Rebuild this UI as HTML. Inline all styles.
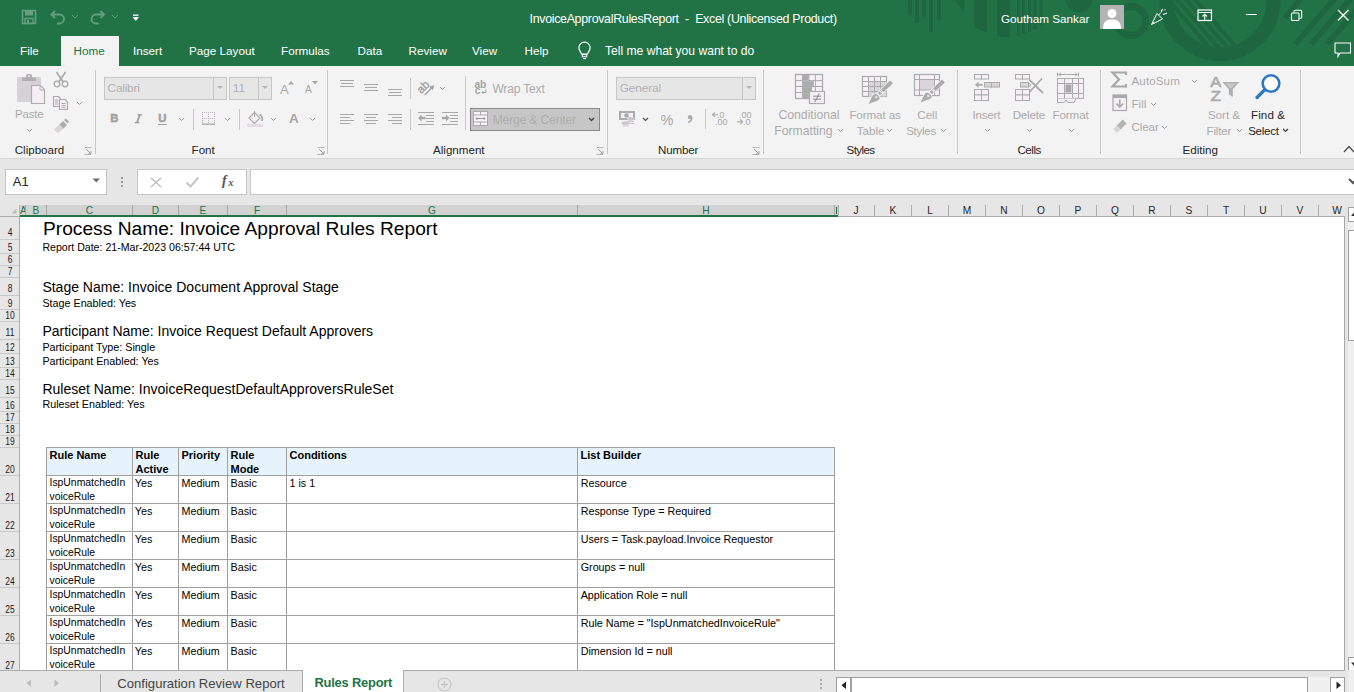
<!DOCTYPE html>
<html><head><meta charset="utf-8"><style>
html,body{margin:0;padding:0;}
body{width:1354px;height:692px;overflow:hidden;position:relative;background:#fff;font-family:"Liberation Sans", sans-serif;}
.t{position:absolute;white-space:pre;}
.b{position:absolute;}
.s{position:absolute;overflow:visible;}
</style></head><body>
<div class="b" style="left:0px;top:0px;width:1354px;height:66px;background:#217346;"></div>
<svg class="s" style="left:0px;top:0px;overflow:hidden;" width="1354" height="66" viewBox="0 0 1354 66"><rect x="908" y="0" width="4" height="15.5" fill="#1E6640"/><rect x="915" y="0" width="4" height="23" fill="#1E6640"/><rect x="922" y="0" width="4" height="16.5" fill="#1E6640"/><rect x="929" y="0" width="4" height="32" fill="#1E6640"/><rect x="937" y="0" width="4" height="20" fill="#1E6640"/><polygon points="955,0 965,0 964,13" fill="#1E6640"/><path d="M974 0 H987 V32.5 Q980 31 974 27 Z" fill="#1E6640"/><path d="M997 0 H1010 V37 Q1003 37 997 36 Z" fill="#1E6640"/><rect x="1017" y="0" width="3" height="35.5" fill="#1E6640"/><rect x="1022" y="0" width="3" height="34" fill="#1E6640"/><rect x="1028" y="0" width="3" height="32" fill="#1E6640"/><rect x="1033.5" y="0" width="3" height="29" fill="#1E6640"/><rect x="1039.5" y="0" width="3" height="25" fill="#1E6640"/><circle cx="1079" cy="-2" r="14" fill="#1E6640"/><circle cx="1131" cy="21" r="14.5" fill="none" stroke="#1E6640" stroke-width="7"/><circle cx="1220" cy="0.5" r="53.5" fill="none" stroke="#1E6640" stroke-width="14"/><clipPath id="cr"><circle cx="1220" cy="0.5" r="47"/></clipPath><g clip-path="url(#cr)" stroke="#1E6640" stroke-width="4"><line x1="1160" y1="-10" x2="1220" y2="60"/><line x1="1169" y1="-10" x2="1229" y2="60"/><line x1="1178" y1="-10" x2="1238" y2="60"/><line x1="1187" y1="-10" x2="1247" y2="60"/></g><g stroke="#1E6640" stroke-width="5.5"><line x1="1360" y1="-30" x2="1295" y2="44"/><line x1="1376" y1="-30" x2="1311" y2="44"/><line x1="1392" y1="-30" x2="1327" y2="44"/><line x1="1300" y1="0" x2="1285" y2="18"/></g></svg>
<div class="t" style="left:529.5px;top:12.50px;font-size:12.4px;line-height:12.4px;color:#fff;letter-spacing:-0.3px;">InvoiceApprovalRulesReport  -  Excel (Unlicensed Product)</div>
<div class="t" style="left:1001px;top:12.60px;font-size:11.7px;line-height:11.7px;color:#fff;">Goutham Sankar</div>
<div class="b" style="left:1100px;top:5px;width:24px;height:24px;background:#B3B3B3;"></div>
<svg class="s" style="left:1100px;top:5px;" width="24" height="24" viewBox="0 0 24 24"><circle cx="12" cy="8.5" r="4.5" fill="#fff"/><path d="M3 24 C3 16 7 14.5 12 14.5 C17 14.5 21 16 21 24Z" fill="#fff"/></svg>
<svg class="s" style="left:21px;top:9px;" width="16" height="16" viewBox="0 0 16 16"><path d="M1.5 1.5 H14.5 V14.5 H1.5 Z" fill="none" stroke="#62A07E" stroke-width="1.6"/><rect x="4" y="1.5" width="8" height="5" fill="#62A07E"/><rect x="4" y="9.5" width="8" height="5" fill="none" stroke="#62A07E" stroke-width="1.4"/><rect x="6" y="11" width="2" height="3.5" fill="#62A07E"/></svg>
<svg class="s" style="left:50px;top:9px;" width="17" height="15" viewBox="0 0 17 15"><path d="M5 2 L1.5 5.5 L5 9" fill="none" stroke="#62A07E" stroke-width="1.8"/><path d="M2 5.5 H9.5 A4.5 4.5 0 0 1 9.5 14.5 H7" fill="none" stroke="#62A07E" stroke-width="1.8"/></svg>
<svg class="s" style="left:71px;top:14px;" width="8" height="5" viewBox="0 0 8 5"><polyline points="1,1 4,4 7,1" fill="none" stroke="#62A07E" stroke-width="1"/></svg>
<svg class="s" style="left:89px;top:9px;" width="17" height="15" viewBox="0 0 17 15"><path d="M11.5 2 L15 5.5 L11.5 9" fill="none" stroke="#62A07E" stroke-width="1.8"/><path d="M14.5 5.5 H7 A4.5 4.5 0 0 0 7 14.5 H9.5" fill="none" stroke="#62A07E" stroke-width="1.8"/></svg>
<svg class="s" style="left:110.5px;top:14px;" width="8" height="5" viewBox="0 0 8 5"><polyline points="1,1 4,4 7,1" fill="none" stroke="#62A07E" stroke-width="1"/></svg>
<svg class="s" style="left:132px;top:14px;" width="8" height="8" viewBox="0 0 8 8"><rect x="1" y="0.5" width="5.5" height="1.3" fill="#fff"/><polygon points="0.5,3 7,3 3.75,7" fill="#fff"/></svg>
<svg class="s" style="left:577px;top:41px;" width="15" height="19" viewBox="0 0 15 19"><path d="M4.5 13 L3.2 10.3 A5.6 5.6 0 1 1 11.8 10.3 L10.5 13 Z" fill="none" stroke="#fff" stroke-width="1.2"/><rect x="5.3" y="13.5" width="4.4" height="2.3" fill="none" stroke="#fff" stroke-width="1.1"/><line x1="6" y1="17.6" x2="9" y2="17.6" stroke="#fff" stroke-width="1.1"/></svg>
<svg class="s" style="left:1150px;top:8px;" width="19" height="18" viewBox="0 0 19 18"><path d="M1.5 16.5 L7 5.5 L12.5 11 Z" fill="none" stroke="#fff" stroke-width="1"/><line x1="4" y1="16" x2="3" y2="14" stroke="#fff"/><line x1="11" y1="4" x2="12.5" y2="1" stroke="#fff" stroke-width="1.1"/><line x1="13" y1="6.5" x2="17" y2="5" stroke="#fff" stroke-width="1.1"/><line x1="14" y1="2.5" x2="15.5" y2="1" stroke="#fff"/><line x1="8.5" y1="7" x2="11" y2="4.5" stroke="#fff"/></svg>
<svg class="s" style="left:1197px;top:9px;" width="16" height="13" viewBox="0 0 16 13"><rect x="1" y="1" width="13.5" height="10.5" fill="none" stroke="#fff" stroke-width="1.2"/><line x1="1" y1="3.5" x2="14.5" y2="3.5" stroke="#fff" stroke-width="1"/><line x1="7.75" y1="5.5" x2="7.75" y2="11" stroke="#fff" stroke-width="1.1"/><polyline points="5.5,7.5 7.75,5.2 10,7.5" fill="none" stroke="#fff" stroke-width="1.1"/></svg>
<div class="b" style="left:1246px;top:14px;width:10.5px;height:1.1px;background:#fff;"></div>
<svg class="s" style="left:1290px;top:9px;" width="14" height="13" viewBox="0 0 14 13"><rect x="1.5" y="4" width="7.5" height="7.5" rx="1" fill="none" stroke="#fff" stroke-width="1.1"/><path d="M4 3.5 V2.5 A1.2 1.2 0 0 1 5.2 1.3 H10.5 A1.2 1.2 0 0 1 11.7 2.5 V8 A1.2 1.2 0 0 1 10.5 9.2 H9.5" fill="none" stroke="#fff" stroke-width="1.1"/></svg>
<svg class="s" style="left:1337px;top:9px;" width="13" height="13" viewBox="0 0 13 13"><line x1="1" y1="1" x2="11.5" y2="11.5" stroke="#fff" stroke-width="1.2"/><line x1="11.5" y1="1" x2="1" y2="11.5" stroke="#fff" stroke-width="1.2"/></svg>
<svg class="s" style="left:1334px;top:42px;" width="18" height="17" viewBox="0 0 18 17"><path d="M1 1 H16.5 V11 H6 L4 14.5 V11 H1 Z" fill="none" stroke="#fff" stroke-width="1.1" stroke-linejoin="miter"/></svg>
<div class="b" style="left:61px;top:36px;width:58px;height:30px;background:#F3F3F3;"></div>
<div class="t" style="left:20px;top:45.30px;font-size:11.7px;line-height:11.7px;color:#fff;">File</div>
<div class="t" style="left:73.5px;top:45.30px;font-size:11.7px;line-height:11.7px;color:#217346;">Home</div>
<div class="t" style="left:133px;top:45.30px;font-size:11.7px;line-height:11.7px;color:#fff;">Insert</div>
<div class="t" style="left:189px;top:45.30px;font-size:11.7px;line-height:11.7px;color:#fff;">Page Layout</div>
<div class="t" style="left:281px;top:45.30px;font-size:11.7px;line-height:11.7px;color:#fff;">Formulas</div>
<div class="t" style="left:357.5px;top:45.30px;font-size:11.7px;line-height:11.7px;color:#fff;">Data</div>
<div class="t" style="left:408.5px;top:45.30px;font-size:11.7px;line-height:11.7px;color:#fff;">Review</div>
<div class="t" style="left:472px;top:45.30px;font-size:11.7px;line-height:11.7px;color:#fff;">View</div>
<div class="t" style="left:524.5px;top:45.30px;font-size:11.7px;line-height:11.7px;color:#fff;">Help</div>
<div class="t" style="left:605px;top:44.96px;font-size:12.1px;line-height:12.1px;color:#fff;">Tell me what you want to do</div>
<div class="b" style="left:0px;top:66px;width:1354px;height:92px;background:#F3F3F3;"></div>
<div class="b" style="left:0px;top:158px;width:1354px;height:1px;background:#D6D6D6;"></div>
<div class="b" style="left:95px;top:70px;width:1px;height:84px;background:#C8C8C8;"></div>
<div class="b" style="left:327px;top:70px;width:1px;height:84px;background:#C8C8C8;"></div>
<div class="b" style="left:607px;top:70px;width:1px;height:84px;background:#C8C8C8;"></div>
<div class="b" style="left:763px;top:70px;width:1px;height:84px;background:#C8C8C8;"></div>
<div class="b" style="left:957px;top:70px;width:1px;height:84px;background:#C8C8C8;"></div>
<div class="b" style="left:1100px;top:70px;width:1px;height:84px;background:#C8C8C8;"></div>
<div class="b" style="left:1300px;top:70px;width:1px;height:84px;background:#C8C8C8;"></div>
<div class="t" style="left:14.7px;top:144.18px;font-size:11.6px;line-height:11.6px;color:#262626;letter-spacing:0px;">Clipboard</div>
<div class="t" style="left:191.6px;top:144.18px;font-size:11.6px;line-height:11.6px;color:#262626;letter-spacing:0px;">Font</div>
<div class="t" style="left:433px;top:144.18px;font-size:11.6px;line-height:11.6px;color:#262626;letter-spacing:0px;">Alignment</div>
<div class="t" style="left:658px;top:144.18px;font-size:11.6px;line-height:11.6px;color:#262626;letter-spacing:-0.15px;">Number</div>
<div class="t" style="left:846.6px;top:144.18px;font-size:11.6px;line-height:11.6px;color:#262626;letter-spacing:-0.6px;">Styles</div>
<div class="t" style="left:1017.5px;top:144.18px;font-size:11.6px;line-height:11.6px;color:#262626;letter-spacing:-0.5px;">Cells</div>
<div class="t" style="left:1182.5px;top:144.18px;font-size:11.6px;line-height:11.6px;color:#262626;letter-spacing:0px;">Editing</div>
<svg class="s" style="left:16px;top:73px;" width="30" height="32" viewBox="0 0 30 32">
<rect x="1" y="4" width="24" height="25" rx="1.5" fill="#D5D1D5"/>
<rect x="6" y="4.5" width="14" height="3.5" fill="#AFADAF"/>
<rect x="10" y="1" width="6" height="4" rx="1.5" fill="#AFADAF"/>
<rect x="12" y="2.2" width="2" height="1.6" fill="#EEE"/>
<path d="M15.5 12.5 H24.5 L28.5 16.5 V30.5 H15.5 Z" fill="#F6F0F6" stroke="#AEAEAE" stroke-width="1.2"/>
<path d="M24 12.5 V17 H28.5" fill="none" stroke="#AEAEAE" stroke-width="1"/>
</svg>
<div class="t" style="left:15px;top:109.07px;font-size:11.5px;line-height:11.5px;color:#ABABAB;letter-spacing:-0.2px;">Paste</div>
<svg class="s" style="left:25.5px;top:127.94999999999999px;" width="7" height="4.5" viewBox="0 0 7 4.5"><polyline points="1,1 3.5,3.5 6,1" fill="none" stroke="#A0A0A0" stroke-width="1"/></svg>
<svg class="s" style="left:53px;top:71px;" width="17" height="17" viewBox="0 0 17 17">
<line x1="3.5" y1="1" x2="10.5" y2="11.5" stroke="#A9A9A9" stroke-width="1.6"/>
<line x1="12.5" y1="1" x2="5.5" y2="11.5" stroke="#A9A9A9" stroke-width="1.6"/>
<circle cx="4" cy="13" r="2.8" fill="none" stroke="#A9A9A9" stroke-width="1.3"/>
<circle cx="12" cy="13" r="2.8" fill="none" stroke="#A9A9A9" stroke-width="1.3"/>
</svg>
<svg class="s" style="left:52px;top:95px;" width="18" height="16" viewBox="0 0 18 16">
<path d="M1.5 1.5 H6.5 L8.5 3.5 V11.5 H1.5 Z" fill="#F6F0F6" stroke="#A9A9A9" stroke-width="1.1"/>
<line x1="3" y1="5" x2="6.5" y2="5" stroke="#A9A9A9"/><line x1="3" y1="7" x2="6.5" y2="7" stroke="#A9A9A9"/><line x1="3" y1="9" x2="6.5" y2="9" stroke="#A9A9A9"/>
<path d="M7.5 4.5 H13 L15.5 7 V14.5 H7.5 Z" fill="#F6F0F6" stroke="#A9A9A9" stroke-width="1.1"/>
<line x1="9.5" y1="8.5" x2="13.5" y2="8.5" stroke="#A9A9A9"/><line x1="9.5" y1="10.5" x2="13.5" y2="10.5" stroke="#A9A9A9"/><line x1="9.5" y1="12.5" x2="13.5" y2="12.5" stroke="#A9A9A9"/>
</svg>
<svg class="s" style="left:75.5px;top:101.25px;" width="7" height="4.5" viewBox="0 0 7 4.5"><polyline points="1,1 3.5,3.5 6,1" fill="none" stroke="#A0A0A0" stroke-width="1"/></svg>
<svg class="s" style="left:53px;top:118px;" width="17" height="16" viewBox="0 0 17 16">
<path d="M1 12 L6.5 6.5 L10.5 10.5 L5 15 Z" fill="#D8D4D8"/>
<path d="M6.5 6.5 L10 3 L14 7 L10.5 10.5 Z" fill="#ABABAB"/>
<path d="M11 2 L13 0.5 L16 3.5 L14.5 5.5 Z" fill="#ABABAB"/>
</svg>
<div class="b" style="left:104px;top:77px;width:123px;height:23px;background:#E6E6E6;border:1px solid #C6C6C6;box-sizing:border-box;"></div>
<div class="b" style="left:213px;top:78px;width:1px;height:21px;background:#C6C6C6;"></div>
<div class="t" style="left:107.6px;top:82.81px;font-size:11.8px;line-height:11.8px;color:#B1AFB1;letter-spacing:-0.2px;">Calibri</div>
<svg class="s" style="left:217px;top:86px;" width="6" height="4" viewBox="0 0 6 4"><polygon points="0,0 6,0 3,3" fill="#B4B4B4"/></svg>
<div class="b" style="left:229px;top:77px;width:43px;height:23px;background:#E6E6E6;border:1px solid #C6C6C6;box-sizing:border-box;"></div>
<div class="b" style="left:258px;top:78px;width:1px;height:21px;background:#C6C6C6;"></div>
<div class="t" style="left:232.8px;top:82.81px;font-size:11.8px;line-height:11.8px;color:#B1AFB1;">11</div>
<svg class="s" style="left:261.5px;top:86px;" width="6" height="4" viewBox="0 0 6 4"><polygon points="0,0 6,0 3,3" fill="#B4B4B4"/></svg>
<div class="t" style="left:280px;top:82.80px;font-size:13px;line-height:13px;color:#A6A6A6;">A</div>
<svg class="s" style="left:288px;top:80.5px;" width="6" height="4" viewBox="0 0 6 4"><polygon points="0,3.5 3,0 6,3.5" fill="#A6A6A6"/></svg>
<div class="t" style="left:305px;top:85.33px;font-size:10px;line-height:10px;color:#A6A6A6;">A</div>
<svg class="s" style="left:311.5px;top:81px;" width="6" height="4" viewBox="0 0 6 4"><polygon points="0,0 6,0 3,3.5" fill="#A6A6A6"/></svg>
<div class="t" style="left:110.3px;top:113.23px;font-size:11.3px;line-height:11.3px;color:#A0A0A0;font-weight:bold;-webkit-text-stroke:0.5px #A0A0A0;">B</div>
<svg class="s" style="left:134px;top:114px;" width="9" height="10" viewBox="0 0 9 10"><line x1="3.5" y1="0.8" x2="8" y2="0.8" stroke="#A0A0A0" stroke-width="1.4"/><line x1="0.8" y1="8.6" x2="5.3" y2="8.6" stroke="#A0A0A0" stroke-width="1.4"/><line x1="5.9" y1="0.8" x2="3" y2="8.6" stroke="#A0A0A0" stroke-width="1.8"/></svg>
<div class="t" style="left:158.2px;top:113.23px;font-size:11.3px;line-height:11.3px;color:#A0A0A0;font-weight:bold;-webkit-text-stroke:0.5px #A0A0A0;">U</div>
<div class="b" style="left:158px;top:123.8px;width:9px;height:1.2px;background:#A0A0A0;"></div>
<svg class="s" style="left:177.5px;top:116.75px;" width="7" height="4.5" viewBox="0 0 7 4.5"><polyline points="1,1 3.5,3.5 6,1" fill="none" stroke="#A0A0A0" stroke-width="1"/></svg>
<div class="b" style="left:193px;top:109px;width:1px;height:21px;background:#C8C8C8;"></div>
<svg class="s" style="left:201px;top:111px;" width="16" height="15" viewBox="0 0 16 15"><rect x="1" y="1" width="1" height="1" fill="#B8B0B8"/><rect x="1" y="3" width="1" height="1" fill="#B8B0B8"/><rect x="1" y="5" width="1" height="1" fill="#B8B0B8"/><rect x="1" y="7" width="1" height="1" fill="#B8B0B8"/><rect x="1" y="9" width="1" height="1" fill="#B8B0B8"/><rect x="1" y="11" width="1" height="1" fill="#B8B0B8"/><rect x="3" y="1" width="1" height="1" fill="#B8B0B8"/><rect x="3" y="7" width="1" height="1" fill="#B8B0B8"/><rect x="5" y="1" width="1" height="1" fill="#B8B0B8"/><rect x="5" y="7" width="1" height="1" fill="#B8B0B8"/><rect x="7" y="1" width="1" height="1" fill="#B8B0B8"/><rect x="7" y="3" width="1" height="1" fill="#B8B0B8"/><rect x="7" y="5" width="1" height="1" fill="#B8B0B8"/><rect x="7" y="7" width="1" height="1" fill="#B8B0B8"/><rect x="7" y="9" width="1" height="1" fill="#B8B0B8"/><rect x="7" y="11" width="1" height="1" fill="#B8B0B8"/><rect x="9" y="1" width="1" height="1" fill="#B8B0B8"/><rect x="9" y="7" width="1" height="1" fill="#B8B0B8"/><rect x="11" y="1" width="1" height="1" fill="#B8B0B8"/><rect x="11" y="7" width="1" height="1" fill="#B8B0B8"/><rect x="13" y="1" width="1" height="1" fill="#B8B0B8"/><rect x="13" y="3" width="1" height="1" fill="#B8B0B8"/><rect x="13" y="5" width="1" height="1" fill="#B8B0B8"/><rect x="13" y="7" width="1" height="1" fill="#B8B0B8"/><rect x="13" y="9" width="1" height="1" fill="#B8B0B8"/><rect x="13" y="11" width="1" height="1" fill="#B8B0B8"/><rect x="1" y="12.5" width="13" height="1.3" fill="#A8A8A8"/></svg>
<svg class="s" style="left:224.0px;top:116.75px;" width="7" height="4.5" viewBox="0 0 7 4.5"><polyline points="1,1 3.5,3.5 6,1" fill="none" stroke="#A0A0A0" stroke-width="1"/></svg>
<div class="b" style="left:239px;top:109px;width:1px;height:21px;background:#C8C8C8;"></div>
<svg class="s" style="left:246px;top:110px;" width="19" height="18" viewBox="0 0 19 18">
<path d="M3 8 L8.5 2.5 L14 8 L8.5 13.5 Z" fill="#F6F0F6" stroke="#A9A9A9" stroke-width="1.1"/>
<line x1="8.5" y1="1" x2="8.5" y2="7" stroke="#A9A9A9" stroke-width="1.1"/>
<path d="M13.5 4.5 Q17 6 16 11" fill="none" stroke="#A9A9A9" stroke-width="1.6"/>
<rect x="1" y="14" width="16" height="3" fill="#E6DCE6"/>
</svg>
<svg class="s" style="left:269.5px;top:116.75px;" width="7" height="4.5" viewBox="0 0 7 4.5"><polyline points="1,1 3.5,3.5 6,1" fill="none" stroke="#A0A0A0" stroke-width="1"/></svg>
<div class="t" style="left:289px;top:112.37px;font-size:13.5px;line-height:13.5px;color:#A6A6A6;font-weight:bold;">A</div>
<svg class="s" style="left:308.8px;top:116.75px;" width="7" height="4.5" viewBox="0 0 7 4.5"><polyline points="1,1 3.5,3.5 6,1" fill="none" stroke="#A0A0A0" stroke-width="1"/></svg>
<div class="b" style="left:340px;top:80px;width:14px;height:1.2px;background:#A8A8A8;"></div>
<div class="b" style="left:341px;top:83px;width:12px;height:1.2px;background:#A8A8A8;"></div>
<div class="b" style="left:340px;top:86px;width:14px;height:1.2px;background:#A8A8A8;"></div>
<div class="b" style="left:364px;top:84px;width:14px;height:1.2px;background:#A8A8A8;"></div>
<div class="b" style="left:365px;top:87px;width:12px;height:1.2px;background:#A8A8A8;"></div>
<div class="b" style="left:364px;top:90px;width:14px;height:1.2px;background:#A8A8A8;"></div>
<div class="b" style="left:388px;top:89px;width:14px;height:1.2px;background:#A8A8A8;"></div>
<div class="b" style="left:389px;top:92px;width:12px;height:1.2px;background:#A8A8A8;"></div>
<div class="b" style="left:388px;top:95px;width:14px;height:1.2px;background:#A8A8A8;"></div>
<div class="b" style="left:410px;top:78px;width:1px;height:21px;background:#C8C8C8;"></div>
<svg class="s" style="left:414px;top:76px;" width="24" height="22" viewBox="0 0 24 22">
<text x="0" y="0" transform="translate(7.2,18.2) rotate(-45)" font-family="Liberation Sans" font-size="11.5" fill="#A0A0A0" stroke="#A0A0A0" stroke-width="0.35">ab</text>
<line x1="10.6" y1="19" x2="18.8" y2="11" stroke="#A0A0A0" stroke-width="1.3"/>
<polygon points="20.2,9.2 15.2,10.6 18.8,14.2" fill="#A0A0A0"/>
</svg>
<svg class="s" style="left:438.8px;top:86.05px;" width="7" height="4.5" viewBox="0 0 7 4.5"><polyline points="1,1 3.5,3.5 6,1" fill="none" stroke="#A0A0A0" stroke-width="1"/></svg>
<div class="b" style="left:340px;top:113.7px;width:14px;height:1.2px;background:#A8A8A8;"></div>
<div class="b" style="left:340px;top:116.7px;width:10px;height:1.2px;background:#A8A8A8;"></div>
<div class="b" style="left:340px;top:119.7px;width:14px;height:1.2px;background:#A8A8A8;"></div>
<div class="b" style="left:340px;top:122.7px;width:10px;height:1.2px;background:#A8A8A8;"></div>
<div class="b" style="left:364px;top:113.7px;width:14px;height:1.2px;background:#A8A8A8;"></div>
<div class="b" style="left:366px;top:116.7px;width:10px;height:1.2px;background:#A8A8A8;"></div>
<div class="b" style="left:364px;top:119.7px;width:14px;height:1.2px;background:#A8A8A8;"></div>
<div class="b" style="left:366px;top:122.7px;width:10px;height:1.2px;background:#A8A8A8;"></div>
<div class="b" style="left:388px;top:113.7px;width:14px;height:1.2px;background:#A8A8A8;"></div>
<div class="b" style="left:392px;top:116.7px;width:10px;height:1.2px;background:#A8A8A8;"></div>
<div class="b" style="left:388px;top:119.7px;width:14px;height:1.2px;background:#A8A8A8;"></div>
<div class="b" style="left:392px;top:122.7px;width:10px;height:1.2px;background:#A8A8A8;"></div>
<div class="b" style="left:410px;top:109px;width:1px;height:21px;background:#C8C8C8;"></div>
<div class="b" style="left:418px;top:112px;width:16px;height:1.2px;background:#A8A8A8;"></div>
<div class="b" style="left:426px;top:115px;width:8px;height:1.2px;background:#A8A8A8;"></div>
<div class="b" style="left:426px;top:118px;width:8px;height:1.2px;background:#A8A8A8;"></div>
<div class="b" style="left:426px;top:121px;width:8px;height:1.2px;background:#A8A8A8;"></div>
<div class="b" style="left:418px;top:124px;width:16px;height:1.2px;background:#A8A8A8;"></div>
<svg class="s" style="left:418px;top:114px;" width="8" height="8" viewBox="0 0 8 8"><polygon points="0,4 3.5,0.5 3.5,2.8 7.5,2.8 7.5,5.2 3.5,5.2 3.5,7.5" fill="#A8A8A8"/></svg>
<div class="b" style="left:442px;top:112px;width:16px;height:1.2px;background:#A8A8A8;"></div>
<div class="b" style="left:450px;top:115px;width:8px;height:1.2px;background:#A8A8A8;"></div>
<div class="b" style="left:450px;top:118px;width:8px;height:1.2px;background:#A8A8A8;"></div>
<div class="b" style="left:450px;top:121px;width:8px;height:1.2px;background:#A8A8A8;"></div>
<div class="b" style="left:442px;top:124px;width:16px;height:1.2px;background:#A8A8A8;"></div>
<svg class="s" style="left:442px;top:114px;" width="8" height="8" viewBox="0 0 8 8"><polygon points="7.5,4 4,0.5 4,2.8 0,2.8 0,5.2 4,5.2 4,7.5" fill="#A8A8A8"/></svg>
<div class="b" style="left:465px;top:76px;width:1px;height:54px;background:#C8C8C8;"></div>
<div class="t" style="left:474.6px;top:79.58px;font-size:10.3px;line-height:10.3px;color:#A4A4A4;font-weight:bold;letter-spacing:-0.4px;">ab</div>
<div class="t" style="left:474.8px;top:86.28px;font-size:10.3px;line-height:10.3px;color:#A4A4A4;font-weight:bold;">c</div>
<svg class="s" style="left:481px;top:89px;" width="6" height="6" viewBox="0 0 6 6"><polyline points="5,0.5 5,3.5 1,3.5" fill="none" stroke="#A8A8A8" stroke-width="1"/><polyline points="2.5,2 1,3.5 2.5,5" fill="none" stroke="#A8A8A8" stroke-width="1"/></svg>
<div class="t" style="left:492.4px;top:83.04px;font-size:12px;line-height:12px;color:#ABABAB;letter-spacing:-0.15px;">Wrap Text</div>
<div class="b" style="left:470px;top:108px;width:130px;height:23px;background:#C6C6C6;border:1px solid #8A8A8A;box-sizing:border-box;"></div>
<svg class="s" style="left:473px;top:111px;" width="16" height="16" viewBox="0 0 16 16">
<rect x="0.5" y="0.5" width="14" height="14" fill="#F8F2F8" stroke="#ABABAB" stroke-width="1"/>
<line x1="0.5" y1="4" x2="14.5" y2="4" stroke="#ABABAB"/><line x1="0.5" y1="11" x2="14.5" y2="11" stroke="#ABABAB"/>
<line x1="7.5" y1="0.5" x2="7.5" y2="4" stroke="#ABABAB"/><line x1="7.5" y1="11" x2="7.5" y2="14.5" stroke="#ABABAB"/>
<line x1="3" y1="7.5" x2="12" y2="7.5" stroke="#9A9A9A"/>
<polyline points="4.5,6 3,7.5 4.5,9" fill="none" stroke="#9A9A9A"/><polyline points="10.5,6 12,7.5 10.5,9" fill="none" stroke="#9A9A9A"/>
</svg>
<div class="t" style="left:492.7px;top:114.14px;font-size:12px;line-height:12px;color:#ADADAD;letter-spacing:-0.1px;">Merge &amp; Center</div>
<svg class="s" style="left:587.5px;top:117.05px;" width="7" height="4.5" viewBox="0 0 7 4.5"><polyline points="1,1 3.5,3.5 6,1" fill="none" stroke="#404040" stroke-width="1.3"/></svg>
<div class="b" style="left:616px;top:77px;width:140px;height:23px;background:#E6E6E6;border:1px solid #C6C6C6;box-sizing:border-box;"></div>
<div class="b" style="left:742px;top:78px;width:1px;height:21px;background:#C6C6C6;"></div>
<div class="t" style="left:619.7px;top:83.01px;font-size:11.8px;line-height:11.8px;color:#B1AFB1;letter-spacing:-0.1px;">General</div>
<svg class="s" style="left:746px;top:86px;" width="6" height="4" viewBox="0 0 6 4"><polygon points="0,0 6,0 3,3" fill="#B4B4B4"/></svg>
<svg class="s" style="left:618px;top:110px;" width="20" height="19" viewBox="0 0 20 19">
<rect x="1" y="1" width="16" height="9" fill="#ABABAB"/>
<path d="M3 3 H15 V8 H3 Z" fill="#F6F0F6"/>
<circle cx="8.5" cy="5.5" r="2.3" fill="#ABABAB"/>
<ellipse cx="12.5" cy="8.8" rx="4" ry="1.9" fill="#CDC7CD"/>
<rect x="10" y="11" width="6" height="1" fill="#CDC7CD"/><rect x="11" y="13" width="5" height="1" fill="#CDC7CD"/>
<ellipse cx="7.5" cy="13.2" rx="4" ry="1.9" fill="#CDC7CD"/>
<rect x="5" y="15.6" width="6" height="1" fill="#CDC7CD"/>
</svg>
<svg class="s" style="left:641.5px;top:117.05px;" width="7" height="4.5" viewBox="0 0 7 4.5"><polyline points="1,1 3.5,3.5 6,1" fill="none" stroke="#505050" stroke-width="1.2"/></svg>
<div class="t" style="left:660.5px;top:112.53px;font-size:14.5px;line-height:14.5px;color:#A8A8A8;">%</div>
<svg class="s" style="left:686px;top:114px;" width="8" height="10" viewBox="0 0 8 10"><circle cx="4" cy="3.2" r="2.1" fill="#A8A8A8"/><path d="M5.8 3.5 Q5.8 7 2.2 8.5" fill="none" stroke="#A8A8A8" stroke-width="1.5"/></svg>
<div class="b" style="left:705px;top:109px;width:1px;height:20px;background:#C8C8C8;"></div>
<svg class="s" style="left:711px;top:110px;" width="18" height="16" viewBox="0 0 18 16">
<text x="6" y="7.6" font-family="Liberation Sans" font-size="9" fill="#A8A8A8">.0</text>
<text x="4" y="14.8" font-family="Liberation Sans" font-size="9" fill="#A8A8A8">.00</text>
<line x1="1.5" y1="4.8" x2="7" y2="4.8" stroke="#A8A8A8" stroke-width="1.1"/><polyline points="3.8,2.5 1.5,4.8 3.8,7.1" fill="none" stroke="#A8A8A8" stroke-width="1.1"/>
</svg>
<svg class="s" style="left:735px;top:110px;" width="18" height="16" viewBox="0 0 18 16">
<text x="4" y="7.6" font-family="Liberation Sans" font-size="9" fill="#A8A8A8">.00</text>
<text x="8" y="14.8" font-family="Liberation Sans" font-size="9" fill="#A8A8A8">.0</text>
<line x1="2" y1="11.8" x2="7.5" y2="11.8" stroke="#A8A8A8" stroke-width="1.1"/><polyline points="5.2,9.5 7.5,11.8 5.2,14.1" fill="none" stroke="#A8A8A8" stroke-width="1.1"/>
</svg>
<svg class="s" style="left:0px;top:0px;pointer-events:none;" width="1354" height="160" viewBox="0 0 1354 160"><rect x="795.5" y="74.5" width="27" height="24" fill="#F7F1F7" stroke="#ABABAB" stroke-width="1.3"/><line x1="802.4" y1="74.5" x2="802.4" y2="98.5" stroke="#ABABAB" stroke-width="1"/><line x1="808.9" y1="74.5" x2="808.9" y2="98.5" stroke="#ABABAB" stroke-width="1"/><line x1="815.4" y1="74.5" x2="815.4" y2="98.5" stroke="#ABABAB" stroke-width="1"/><line x1="795.5" y1="80.6" x2="822.5" y2="80.6" stroke="#ABABAB" stroke-width="1"/><line x1="795.5" y1="86.5" x2="822.5" y2="86.5" stroke="#ABABAB" stroke-width="1"/><line x1="795.5" y1="92.5" x2="822.5" y2="92.5" stroke="#ABABAB" stroke-width="1"/><rect x="803" y="75" width="5.8" height="5.1" fill="#ABABAB"/><rect x="803" y="81.2" width="10.8" height="4.8" fill="#ABABAB"/><rect x="803" y="87.1" width="9" height="4.9" fill="#ABABAB"/><rect x="803" y="93.1" width="5.8" height="5.1" fill="#ABABAB"/><rect x="809.5" y="91.5" width="15" height="12" fill="#F7F1F7" stroke="#ABABAB" stroke-width="1.2"/><line x1="813" y1="96.2" x2="821" y2="96.2" stroke="#999" stroke-width="1.2"/><line x1="813" y1="99.2" x2="821" y2="99.2" stroke="#999" stroke-width="1.2"/><line x1="819.2" y1="93.5" x2="814.8" y2="102" stroke="#999" stroke-width="1.2"/><rect x="862.5" y="76.5" width="24" height="20" fill="#F7F1F7" stroke="#ABABAB" stroke-width="1.2"/><rect x="868.5" y="81.5" width="18" height="15" fill="#DAD5DA"/><line x1="868.5" y1="76.5" x2="868.5" y2="96.5" stroke="#ABABAB" stroke-width="1"/><line x1="874.5" y1="76.5" x2="874.5" y2="96.5" stroke="#ABABAB" stroke-width="1"/><line x1="880.5" y1="76.5" x2="880.5" y2="96.5" stroke="#ABABAB" stroke-width="1"/><line x1="862.5" y1="81.5" x2="886.5" y2="81.5" stroke="#ABABAB" stroke-width="1"/><line x1="862.5" y1="86.5" x2="886.5" y2="86.5" stroke="#ABABAB" stroke-width="1"/><line x1="862.5" y1="91.5" x2="886.5" y2="91.5" stroke="#ABABAB" stroke-width="1"/><g fill="#F3F3F3" stroke="#F3F3F3" stroke-width="1.6"><polygon points="892.88,83.45 890.12,80.55 881.06,89.50 883.54,92.10"/><polygon points="881.80,93.50 879.58,91.18 877.74,92.94 879.96,95.26"/><path d="M879.13,97.15 C881.11,98.30 877.52,101.46 874.90,101.48 L868.50,104.00 L872.41,96.11 C874.38,93.11 876.92,93.46 879.13,97.15 Z"/></g><g fill="#ABABAB"><polygon points="892.88,83.45 890.12,80.55 881.06,89.50 883.54,92.10"/><polygon points="881.80,93.50 879.58,91.18 877.74,92.94 879.96,95.26"/><path d="M879.13,97.15 C881.11,98.30 877.52,101.46 874.90,101.48 L868.50,104.00 L872.41,96.11 C874.38,93.11 876.92,93.46 879.13,97.15 Z"/></g><circle cx="876.21" cy="97.32" r="1.3" fill="#E4DEE4"/><rect x="914.5" y="74.5" width="25" height="21" fill="#F7F1F7" stroke="#ABABAB" stroke-width="1.2"/><rect x="919.5" y="79.5" width="15" height="10.5" fill="#DAD5DA"/><line x1="919.5" y1="74.5" x2="919.5" y2="95.5" stroke="#ABABAB" stroke-width="1"/><line x1="934.5" y1="74.5" x2="934.5" y2="95.5" stroke="#ABABAB" stroke-width="1"/><line x1="914.5" y1="79.5" x2="939.5" y2="79.5" stroke="#ABABAB" stroke-width="1"/><line x1="914.5" y1="90" x2="939.5" y2="90" stroke="#ABABAB" stroke-width="1"/><g fill="#F3F3F3" stroke="#F3F3F3" stroke-width="1.6"><polygon points="944.87,82.46 942.13,79.54 933.07,88.29 935.53,90.91"/><polygon points="933.78,92.27 931.60,89.94 929.76,91.66 931.94,93.99"/><path d="M931.11,95.87 C933.07,97.05 929.48,100.12 926.88,100.10 L920.50,102.50 L924.43,94.72 C926.42,91.77 928.93,92.16 931.11,95.87 Z"/></g><g fill="#ABABAB"><polygon points="944.87,82.46 942.13,79.54 933.07,88.29 935.53,90.91"/><polygon points="933.78,92.27 931.60,89.94 929.76,91.66 931.94,93.99"/><path d="M931.11,95.87 C933.07,97.05 929.48,100.12 926.88,100.10 L920.50,102.50 L924.43,94.72 C926.42,91.77 928.93,92.16 931.11,95.87 Z"/></g><circle cx="928.20" cy="95.99" r="1.3" fill="#E4DEE4"/></svg>
<div class="t" style="left:778.5px;top:108.67px;font-size:12.2px;line-height:12.2px;color:#ABABAB;">Conditional</div>
<div class="t" style="left:774.3px;top:124.87px;font-size:12.2px;line-height:12.2px;color:#ABABAB;">Formatting</div>
<svg class="s" style="left:836.7px;top:128.25px;" width="7" height="4.5" viewBox="0 0 7 4.5"><polyline points="1,1 3.5,3.5 6,1" fill="none" stroke="#A0A0A0" stroke-width="1"/></svg>
<div class="t" style="left:849.4px;top:109.18px;font-size:11.6px;line-height:11.6px;color:#ABABAB;letter-spacing:-0.1px;">Format as</div>
<div class="t" style="left:856.8px;top:125.38px;font-size:11.6px;line-height:11.6px;color:#ABABAB;">Table</div>
<svg class="s" style="left:886.0px;top:128.25px;" width="7" height="4.5" viewBox="0 0 7 4.5"><polyline points="1,1 3.5,3.5 6,1" fill="none" stroke="#A0A0A0" stroke-width="1"/></svg>
<div class="t" style="left:917.3px;top:109.18px;font-size:11.6px;line-height:11.6px;color:#ABABAB;">Cell</div>
<div class="t" style="left:906.2px;top:125.38px;font-size:11.6px;line-height:11.6px;color:#ABABAB;letter-spacing:-0.3px;">Styles</div>
<svg class="s" style="left:939.5px;top:128.25px;" width="7" height="4.5" viewBox="0 0 7 4.5"><polyline points="1,1 3.5,3.5 6,1" fill="none" stroke="#A0A0A0" stroke-width="1"/></svg>
<svg class="s" style="left:973px;top:73px;" width="29" height="30" viewBox="0 0 29 30">
<rect x="1.5" y="1.5" width="7" height="4.5" fill="#F6F0F6" stroke="#ABABAB"/><rect x="8.5" y="1.5" width="7" height="4.5" fill="#F6F0F6" stroke="#ABABAB"/>
<rect x="11.5" y="9.5" width="7" height="4.5" fill="#D8D4D8" stroke="#ABABAB"/><rect x="18.5" y="9.5" width="8" height="4.5" fill="#D8D4D8" stroke="#ABABAB"/>
<polygon points="2,11.8 5.5,8.5 5.5,10.8 9.5,10.8 9.5,12.8 5.5,12.8 5.5,15" fill="#ABABAB"/>
<rect x="1.5" y="16.5" width="7" height="5.5" fill="#F6F0F6" stroke="#ABABAB"/><rect x="8.5" y="16.5" width="7" height="5.5" fill="#F6F0F6" stroke="#ABABAB"/>
<rect x="1.5" y="22" width="7" height="5.5" fill="#F6F0F6" stroke="#ABABAB"/><rect x="8.5" y="22" width="7" height="5.5" fill="#F6F0F6" stroke="#ABABAB"/>
</svg>
<div class="t" style="left:972.4px;top:109.18px;font-size:11.6px;line-height:11.6px;color:#ABABAB;letter-spacing:-0.2px;">Insert</div>
<svg class="s" style="left:983.5px;top:128.05px;" width="7" height="4.5" viewBox="0 0 7 4.5"><polyline points="1,1 3.5,3.5 6,1" fill="none" stroke="#A0A0A0" stroke-width="1"/></svg>
<svg class="s" style="left:1014px;top:73px;" width="32" height="30" viewBox="0 0 32 30">
<rect x="1.5" y="1.5" width="7" height="4.5" fill="#F6F0F6" stroke="#ABABAB"/><rect x="8.5" y="1.5" width="7" height="4.5" fill="#F6F0F6" stroke="#ABABAB"/>
<rect x="6.5" y="9.5" width="8" height="4.5" fill="#D8D4D8" stroke="#ABABAB"/><polygon points="14.5,9.5 17,11.8 14.5,14" fill="#D8D4D8" stroke="#ABABAB"/>
<line x1="15" y1="6.5" x2="29" y2="20" stroke="#ABABAB" stroke-width="1.8"/><line x1="28" y1="5.5" x2="15" y2="19.5" stroke="#ABABAB" stroke-width="1.8"/>
<rect x="1.5" y="16.5" width="7" height="5.5" fill="#F6F0F6" stroke="#ABABAB"/><rect x="8.5" y="16.5" width="7" height="5.5" fill="#F6F0F6" stroke="#ABABAB"/>
<rect x="1.5" y="22" width="7" height="5.5" fill="#F6F0F6" stroke="#ABABAB"/><rect x="8.5" y="22" width="7" height="5.5" fill="#F6F0F6" stroke="#ABABAB"/>
</svg>
<div class="t" style="left:1012.7px;top:109.18px;font-size:11.6px;line-height:11.6px;color:#ABABAB;letter-spacing:-0.2px;">Delete</div>
<svg class="s" style="left:1025.5px;top:128.05px;" width="7" height="4.5" viewBox="0 0 7 4.5"><polyline points="1,1 3.5,3.5 6,1" fill="none" stroke="#A0A0A0" stroke-width="1"/></svg>
<svg class="s" style="left:1056px;top:72px;" width="30" height="33" viewBox="0 0 30 33">
<line x1="1.5" y1="0.5" x2="1.5" y2="4.5" stroke="#ABABAB"/><line x1="22.5" y1="0.5" x2="22.5" y2="4.5" stroke="#ABABAB"/>
<line x1="2.5" y1="2.5" x2="21.5" y2="2.5" stroke="#ABABAB"/><polyline points="5,0.8 2.8,2.5 5,4.2" fill="none" stroke="#ABABAB"/><polyline points="19,0.8 21.2,2.5 19,4.2" fill="none" stroke="#ABABAB"/>
<rect x="1.5" y="6.5" width="26" height="20" fill="#F6F0F6" stroke="#ABABAB"/>
<line x1="1.5" y1="11.5" x2="27.5" y2="11.5" stroke="#ABABAB"/><line x1="1.5" y1="21.5" x2="27.5" y2="21.5" stroke="#ABABAB"/>
<line x1="8.5" y1="6.5" x2="8.5" y2="26.5" stroke="#ABABAB"/><line x1="16.5" y1="6.5" x2="16.5" y2="26.5" stroke="#ABABAB"/><line x1="22.5" y1="6.5" x2="22.5" y2="26.5" stroke="#ABABAB"/>
<rect x="9.5" y="12.5" width="6" height="8" fill="#A8A8A8"/>
<path d="M1.5 26.5 V30.5 H8 L10 28 L12 30.5 H18 L20 26.5" fill="#F6F0F6" stroke="#ABABAB"/>
</svg>
<div class="t" style="left:1052.5px;top:109.18px;font-size:11.6px;line-height:11.6px;color:#ABABAB;letter-spacing:-0.1px;">Format</div>
<svg class="s" style="left:1067.5px;top:128.05px;" width="7" height="4.5" viewBox="0 0 7 4.5"><polyline points="1,1 3.5,3.5 6,1" fill="none" stroke="#A0A0A0" stroke-width="1"/></svg>
<svg class="s" style="left:1111px;top:71px;" width="18" height="17" viewBox="0 0 18 17"><path d="M1 1.5 H15 V4 M15 1.5 H1.5 L8 8.5 L1.5 15.5 H15 V13" fill="none" stroke="#A8A8A8" stroke-width="2.2" stroke-linejoin="miter"/></svg>
<div class="t" style="left:1131.5px;top:74.78px;font-size:11.6px;line-height:11.6px;color:#ABABAB;letter-spacing:0.1px;">AutoSum</div>
<svg class="s" style="left:1191.2px;top:79.25px;" width="7" height="4.5" viewBox="0 0 7 4.5"><polyline points="1,1 3.5,3.5 6,1" fill="none" stroke="#A0A0A0" stroke-width="1"/></svg>
<svg class="s" style="left:1112px;top:94px;" width="16" height="18" viewBox="0 0 16 18">
<rect x="1" y="1" width="13.5" height="15.5" fill="#F6F0F6" stroke="#A8A8A8" stroke-width="1.2"/>
<rect x="1" y="1" width="13.5" height="3" fill="#A8A8A8"/>
<line x1="7.75" y1="5.5" x2="7.75" y2="13" stroke="#A8A8A8" stroke-width="1.6"/>
<polyline points="4.5,9.5 7.75,13 11,9.5" fill="none" stroke="#A8A8A8" stroke-width="1.6"/>
</svg>
<div class="t" style="left:1131.5px;top:97.98px;font-size:11.6px;line-height:11.6px;color:#ABABAB;">Fill</div>
<svg class="s" style="left:1149.5px;top:102.25px;" width="7" height="4.5" viewBox="0 0 7 4.5"><polyline points="1,1 3.5,3.5 6,1" fill="none" stroke="#A0A0A0" stroke-width="1"/></svg>
<svg class="s" style="left:1112px;top:118px;" width="16" height="15" viewBox="0 0 16 15">
<path d="M1.2 11.2 L4.8 7.6 L8.6 11.4 L5 15 Z" fill="#D8D4D8"/>
<path d="M4.8 7.6 L10.8 1.6 L14.6 5.4 L8.6 11.4 Z" fill="#B4B4B4"/>
</svg>
<div class="t" style="left:1131.5px;top:120.98px;font-size:11.6px;line-height:11.6px;color:#ABABAB;letter-spacing:-0.1px;">Clear</div>
<svg class="s" style="left:1161.2px;top:125.25px;" width="7" height="4.5" viewBox="0 0 7 4.5"><polyline points="1,1 3.5,3.5 6,1" fill="none" stroke="#A0A0A0" stroke-width="1"/></svg>
<svg class="s" style="left:1209px;top:74px;" width="32" height="28" viewBox="0 0 32 28">
<text x="1.3" y="12.6" font-family="Liberation Sans" font-size="14.5" fill="#ABABAB" stroke="#ABABAB" stroke-width="0.6" textLength="11" lengthAdjust="spacingAndGlyphs">A</text>
<text x="1.5" y="26.7" font-family="Liberation Sans" font-size="14.5" fill="#ABABAB" stroke="#ABABAB" stroke-width="0.6" textLength="10.5" lengthAdjust="spacingAndGlyphs">Z</text>
<path d="M13.3 8 H30.2 L23.8 15.3 V23 L19.8 20.5 V15.3 Z" fill="#B0B0B0"/>
<path d="M16.5 9.6 H27 L22.5 14 H20.8 Z" fill="#C9C5C9"/>
</svg>
<div class="t" style="left:1207.9px;top:109.18px;font-size:11.6px;line-height:11.6px;color:#ABABAB;">Sort &amp;</div>
<div class="t" style="left:1206.5px;top:125.38px;font-size:11.6px;line-height:11.6px;color:#ABABAB;letter-spacing:-0.2px;">Filter</div>
<svg class="s" style="left:1235.5px;top:128.25px;" width="7" height="4.5" viewBox="0 0 7 4.5"><polyline points="1,1 3.5,3.5 6,1" fill="none" stroke="#A0A0A0" stroke-width="1"/></svg>
<svg class="s" style="left:1254px;top:73px;" width="30" height="29" viewBox="0 0 30 29"><circle cx="17" cy="10.5" r="8.3" fill="#fff" stroke="#2B79C2" stroke-width="2.6"/><line x1="11" y1="16.5" x2="3" y2="24.5" stroke="#2B79C2" stroke-width="3.2" stroke-linecap="round"/></svg>
<div class="t" style="left:1251px;top:109.18px;font-size:11.6px;line-height:11.6px;color:#262626;letter-spacing:0.1px;">Find &amp;</div>
<div class="t" style="left:1248.2px;top:125.38px;font-size:11.6px;line-height:11.6px;color:#262626;letter-spacing:-0.3px;">Select</div>
<svg class="s" style="left:1282.3px;top:128.25px;" width="7" height="4.5" viewBox="0 0 7 4.5"><polyline points="1,1 3.5,3.5 6,1" fill="none" stroke="#404040" stroke-width="1.2"/></svg>
<svg class="s" style="left:1343px;top:144px;" width="12" height="9" viewBox="0 0 12 9"><polyline points="1,8 6,2.5 11,8" fill="none" stroke="#505050" stroke-width="1.3"/></svg>
<svg class="s" style="left:84px;top:146.5px;" width="9" height="9" viewBox="0 0 9 9"><path d="M0.5 0.5 H7.5 V7.5 H0.5 Z M0.5 0.5" fill="none" stroke="#B8B8B8" stroke-width="1" stroke-dasharray="7 7.5 7 100"/><line x1="2" y1="2" x2="7" y2="7" stroke="#A0A0A0"/><polyline points="4,7 7,7 7,4" fill="none" stroke="#A0A0A0"/></svg>
<svg class="s" style="left:316.5px;top:146.5px;" width="9" height="9" viewBox="0 0 9 9"><path d="M0.5 0.5 H7.5 V7.5 H0.5 Z M0.5 0.5" fill="none" stroke="#B8B8B8" stroke-width="1" stroke-dasharray="7 7.5 7 100"/><line x1="2" y1="2" x2="7" y2="7" stroke="#A0A0A0"/><polyline points="4,7 7,7 7,4" fill="none" stroke="#A0A0A0"/></svg>
<svg class="s" style="left:596px;top:146.5px;" width="9" height="9" viewBox="0 0 9 9"><path d="M0.5 0.5 H7.5 V7.5 H0.5 Z M0.5 0.5" fill="none" stroke="#B8B8B8" stroke-width="1" stroke-dasharray="7 7.5 7 100"/><line x1="2" y1="2" x2="7" y2="7" stroke="#A0A0A0"/><polyline points="4,7 7,7 7,4" fill="none" stroke="#A0A0A0"/></svg>
<svg class="s" style="left:752px;top:146.5px;" width="9" height="9" viewBox="0 0 9 9"><path d="M0.5 0.5 H7.5 V7.5 H0.5 Z M0.5 0.5" fill="none" stroke="#B8B8B8" stroke-width="1" stroke-dasharray="7 7.5 7 100"/><line x1="2" y1="2" x2="7" y2="7" stroke="#A0A0A0"/><polyline points="4,7 7,7 7,4" fill="none" stroke="#A0A0A0"/></svg>
<div class="b" style="left:0px;top:159px;width:1354px;height:57px;background:#E6E6E6;"></div>
<div class="b" style="left:5px;top:169px;width:102px;height:26px;background:#fff;border:1px solid #C6C6C6;box-sizing:border-box;"></div>
<div class="t" style="left:12.8px;top:175.98px;font-size:12.9px;line-height:12.9px;color:#262626;">A1</div>
<svg class="s" style="left:92px;top:178px;" width="9" height="6" viewBox="0 0 9 6"><polygon points="0.5,0.5 8,0.5 4.25,4.5" fill="#6E6E6E"/></svg>
<div class="b" style="left:121px;top:177px;width:2px;height:2px;background:#9A9A9A;"></div>
<div class="b" style="left:121px;top:181px;width:2px;height:2px;background:#9A9A9A;"></div>
<div class="b" style="left:121px;top:185px;width:2px;height:2px;background:#9A9A9A;"></div>
<div class="b" style="left:137px;top:169px;width:110px;height:26px;background:#fff;border:1px solid #C6C6C6;box-sizing:border-box;"></div>
<svg class="s" style="left:150px;top:177px;" width="12" height="11" viewBox="0 0 12 11"><line x1="1" y1="1" x2="11" y2="10" stroke="#BDBDBD" stroke-width="1.3"/><line x1="11" y1="1" x2="1" y2="10" stroke="#BDBDBD" stroke-width="1.3"/></svg>
<svg class="s" style="left:185px;top:176px;" width="15" height="12" viewBox="0 0 15 12"><polyline points="1.5,6.5 5.5,10.5 13.5,1.5" fill="none" stroke="#C6C6C6" stroke-width="2"/></svg>
<div class="t" style="left:222px;top:173.65px;font-size:14px;line-height:14px;color:#555;font-family:'Liberation Serif',serif;font-style:italic;font-weight:bold;">f</div>
<div class="t" style="left:228.3px;top:177.71px;font-size:10.5px;line-height:10.5px;color:#555;font-family:'Liberation Serif',serif;font-style:italic;font-weight:bold;">x</div>
<div class="b" style="left:250px;top:169px;width:1110px;height:26px;background:#fff;border:1px solid #C6C6C6;box-sizing:border-box;"></div>
<svg class="s" style="left:1348px;top:178px;" width="10" height="7" viewBox="0 0 10 7"><polyline points="1,1 5,5 9,1" fill="none" stroke="#555" stroke-width="2"/></svg>
<div class="b" style="left:0px;top:205px;width:1345px;height:11px;background:#E6E6E6;"></div>
<svg class="s" style="left:11px;top:208px;" width="6" height="6" viewBox="0 0 6 6"><polygon points="5.5,0.5 5.5,5.5 0.5,5.5" fill="#BDBDBD"/></svg>
<div class="b" style="left:19px;top:205px;width:1px;height:11px;background:#B8B8B8;"></div>
<div class="b" style="left:20px;top:205px;width:818px;height:10px;background:#D2D2D2;"></div>
<div class="b" style="left:25px;top:205px;width:1px;height:10px;background:#A8A8A8;"></div>
<div class="b" style="left:46px;top:205px;width:1px;height:10px;background:#A8A8A8;"></div>
<div class="b" style="left:132px;top:205px;width:1px;height:10px;background:#A8A8A8;"></div>
<div class="b" style="left:178px;top:205px;width:1px;height:10px;background:#A8A8A8;"></div>
<div class="b" style="left:227px;top:205px;width:1px;height:10px;background:#A8A8A8;"></div>
<div class="b" style="left:286px;top:205px;width:1px;height:10px;background:#A8A8A8;"></div>
<div class="b" style="left:577px;top:205px;width:1px;height:10px;background:#A8A8A8;"></div>
<div class="b" style="left:834px;top:205px;width:1px;height:10px;background:#A8A8A8;"></div>
<div class="b" style="left:838px;top:205px;width:1px;height:10px;background:#A8A8A8;"></div>
<div class="b" style="left:874px;top:205px;width:1px;height:11px;background:#ABABAB;"></div>
<div class="b" style="left:911px;top:205px;width:1px;height:11px;background:#ABABAB;"></div>
<div class="b" style="left:948px;top:205px;width:1px;height:11px;background:#ABABAB;"></div>
<div class="b" style="left:985px;top:205px;width:1px;height:11px;background:#ABABAB;"></div>
<div class="b" style="left:1022px;top:205px;width:1px;height:11px;background:#ABABAB;"></div>
<div class="b" style="left:1059px;top:205px;width:1px;height:11px;background:#ABABAB;"></div>
<div class="b" style="left:1096px;top:205px;width:1px;height:11px;background:#ABABAB;"></div>
<div class="b" style="left:1133px;top:205px;width:1px;height:11px;background:#ABABAB;"></div>
<div class="b" style="left:1170px;top:205px;width:1px;height:11px;background:#ABABAB;"></div>
<div class="b" style="left:1207px;top:205px;width:1px;height:11px;background:#ABABAB;"></div>
<div class="b" style="left:1244px;top:205px;width:1px;height:11px;background:#ABABAB;"></div>
<div class="b" style="left:1281px;top:205px;width:1px;height:11px;background:#ABABAB;"></div>
<div class="b" style="left:1318px;top:205px;width:1px;height:11px;background:#ABABAB;"></div>
<div class="b" style="left:1355px;top:205px;width:1px;height:11px;background:#ABABAB;"></div>
<div class="b" style="left:20px;top:205px;width:5px;height:10px;overflow:hidden;"><div class="t" style="left:0px;top:1.34px;font-size:10px;line-height:10px;color:#217346;">A</div></div>
<div class="t" style="left:36.0px;top:206.17px;font-size:10.2px;line-height:10.2px;color:#217346;transform:translateX(-50%);">B</div>
<div class="t" style="left:89.5px;top:206.17px;font-size:10.2px;line-height:10.2px;color:#217346;transform:translateX(-50%);">C</div>
<div class="t" style="left:155.5px;top:206.17px;font-size:10.2px;line-height:10.2px;color:#217346;transform:translateX(-50%);">D</div>
<div class="t" style="left:203.0px;top:206.17px;font-size:10.2px;line-height:10.2px;color:#217346;transform:translateX(-50%);">E</div>
<div class="t" style="left:257.0px;top:206.17px;font-size:10.2px;line-height:10.2px;color:#217346;transform:translateX(-50%);">F</div>
<div class="t" style="left:432.0px;top:206.17px;font-size:10.2px;line-height:10.2px;color:#217346;transform:translateX(-50%);">G</div>
<div class="t" style="left:706.0px;top:206.17px;font-size:10.2px;line-height:10.2px;color:#217346;transform:translateX(-50%);">H</div>
<div class="b" style="left:835.5px;top:207px;width:1px;height:7px;background:#217346;"></div>
<div class="t" style="left:856.0px;top:206.17px;font-size:10.2px;line-height:10.2px;color:#262626;transform:translateX(-50%);">J</div>
<div class="t" style="left:893.0px;top:206.17px;font-size:10.2px;line-height:10.2px;color:#262626;transform:translateX(-50%);">K</div>
<div class="t" style="left:930.0px;top:206.17px;font-size:10.2px;line-height:10.2px;color:#262626;transform:translateX(-50%);">L</div>
<div class="t" style="left:967.0px;top:206.17px;font-size:10.2px;line-height:10.2px;color:#262626;transform:translateX(-50%);">M</div>
<div class="t" style="left:1004.0px;top:206.17px;font-size:10.2px;line-height:10.2px;color:#262626;transform:translateX(-50%);">N</div>
<div class="t" style="left:1041.0px;top:206.17px;font-size:10.2px;line-height:10.2px;color:#262626;transform:translateX(-50%);">O</div>
<div class="t" style="left:1078.0px;top:206.17px;font-size:10.2px;line-height:10.2px;color:#262626;transform:translateX(-50%);">P</div>
<div class="t" style="left:1115.0px;top:206.17px;font-size:10.2px;line-height:10.2px;color:#262626;transform:translateX(-50%);">Q</div>
<div class="t" style="left:1152.0px;top:206.17px;font-size:10.2px;line-height:10.2px;color:#262626;transform:translateX(-50%);">R</div>
<div class="t" style="left:1189.0px;top:206.17px;font-size:10.2px;line-height:10.2px;color:#262626;transform:translateX(-50%);">S</div>
<div class="t" style="left:1226.0px;top:206.17px;font-size:10.2px;line-height:10.2px;color:#262626;transform:translateX(-50%);">T</div>
<div class="t" style="left:1263.0px;top:206.17px;font-size:10.2px;line-height:10.2px;color:#262626;transform:translateX(-50%);">U</div>
<div class="t" style="left:1300.0px;top:206.17px;font-size:10.2px;line-height:10.2px;color:#262626;transform:translateX(-50%);">V</div>
<div class="t" style="left:1337.0px;top:206.17px;font-size:10.2px;line-height:10.2px;color:#262626;transform:translateX(-50%);">W</div>
<div class="b" style="left:20px;top:215px;width:818px;height:2px;background:#217346;"></div>
<div class="b" style="left:838px;top:216px;width:507px;height:1px;background:#ABABAB;"></div>
<div class="b" style="left:0px;top:216px;width:19px;height:454px;background:#E6E6E6;"></div>
<div class="b" style="left:19px;top:216px;width:1px;height:454px;background:#ABABAB;"></div>
<div class="b" style="left:0px;top:216px;width:19px;height:1px;background:#ABABAB;"></div>
<div class="b" style="left:0px;top:239px;width:19px;height:1px;background:#C8C8C8;"></div>
<div class="t" style="left:10px;top:226.73px;font-size:10.6px;line-height:10.6px;color:#1A1A1A;transform:translateX(-50%) scaleX(0.8);">4</div>
<div class="b" style="left:0px;top:253px;width:19px;height:1px;background:#C8C8C8;"></div>
<div class="t" style="left:10px;top:242.03px;font-size:10.6px;line-height:10.6px;color:#1A1A1A;transform:translateX(-50%) scaleX(0.8);">5</div>
<div class="b" style="left:0px;top:265px;width:19px;height:1px;background:#C8C8C8;"></div>
<div class="t" style="left:10px;top:254.03px;font-size:10.6px;line-height:10.6px;color:#1A1A1A;transform:translateX(-50%) scaleX(0.8);">6</div>
<div class="b" style="left:0px;top:277px;width:19px;height:1px;background:#C8C8C8;"></div>
<div class="t" style="left:10px;top:266.03px;font-size:10.6px;line-height:10.6px;color:#1A1A1A;transform:translateX(-50%) scaleX(0.8);">7</div>
<div class="b" style="left:0px;top:295px;width:19px;height:1px;background:#C8C8C8;"></div>
<div class="t" style="left:10px;top:282.73px;font-size:10.6px;line-height:10.6px;color:#1A1A1A;transform:translateX(-50%) scaleX(0.8);">8</div>
<div class="b" style="left:0px;top:309px;width:19px;height:1px;background:#C8C8C8;"></div>
<div class="t" style="left:10px;top:298.03px;font-size:10.6px;line-height:10.6px;color:#1A1A1A;transform:translateX(-50%) scaleX(0.8);">9</div>
<div class="b" style="left:0px;top:321px;width:19px;height:1px;background:#C8C8C8;"></div>
<div class="t" style="left:10px;top:310.03px;font-size:10.6px;line-height:10.6px;color:#1A1A1A;transform:translateX(-50%) scaleX(0.8);">10</div>
<div class="b" style="left:0px;top:339px;width:19px;height:1px;background:#C8C8C8;"></div>
<div class="t" style="left:10px;top:326.73px;font-size:10.6px;line-height:10.6px;color:#1A1A1A;transform:translateX(-50%) scaleX(0.8);">11</div>
<div class="b" style="left:0px;top:353px;width:19px;height:1px;background:#C8C8C8;"></div>
<div class="t" style="left:10px;top:342.03px;font-size:10.6px;line-height:10.6px;color:#1A1A1A;transform:translateX(-50%) scaleX(0.8);">12</div>
<div class="b" style="left:0px;top:367px;width:19px;height:1px;background:#C8C8C8;"></div>
<div class="t" style="left:10px;top:356.03px;font-size:10.6px;line-height:10.6px;color:#1A1A1A;transform:translateX(-50%) scaleX(0.8);">13</div>
<div class="b" style="left:0px;top:379px;width:19px;height:1px;background:#C8C8C8;"></div>
<div class="t" style="left:10px;top:368.03px;font-size:10.6px;line-height:10.6px;color:#1A1A1A;transform:translateX(-50%) scaleX(0.8);">14</div>
<div class="b" style="left:0px;top:397px;width:19px;height:1px;background:#C8C8C8;"></div>
<div class="t" style="left:10px;top:384.73px;font-size:10.6px;line-height:10.6px;color:#1A1A1A;transform:translateX(-50%) scaleX(0.8);">15</div>
<div class="b" style="left:0px;top:411px;width:19px;height:1px;background:#C8C8C8;"></div>
<div class="t" style="left:10px;top:400.03px;font-size:10.6px;line-height:10.6px;color:#1A1A1A;transform:translateX(-50%) scaleX(0.8);">16</div>
<div class="b" style="left:0px;top:423px;width:19px;height:1px;background:#C8C8C8;"></div>
<div class="t" style="left:10px;top:412.03px;font-size:10.6px;line-height:10.6px;color:#1A1A1A;transform:translateX(-50%) scaleX(0.8);">17</div>
<div class="b" style="left:0px;top:435px;width:19px;height:1px;background:#C8C8C8;"></div>
<div class="t" style="left:10px;top:424.03px;font-size:10.6px;line-height:10.6px;color:#1A1A1A;transform:translateX(-50%) scaleX(0.8);">18</div>
<div class="b" style="left:0px;top:447px;width:19px;height:1px;background:#C8C8C8;"></div>
<div class="t" style="left:10px;top:436.03px;font-size:10.6px;line-height:10.6px;color:#1A1A1A;transform:translateX(-50%) scaleX(0.8);">19</div>
<div class="b" style="left:0px;top:475px;width:19px;height:1px;background:#C8C8C8;"></div>
<div class="t" style="left:10px;top:464.03px;font-size:10.6px;line-height:10.6px;color:#1A1A1A;transform:translateX(-50%) scaleX(0.8);">20</div>
<div class="b" style="left:0px;top:503px;width:19px;height:1px;background:#C8C8C8;"></div>
<div class="t" style="left:10px;top:492.03px;font-size:10.6px;line-height:10.6px;color:#1A1A1A;transform:translateX(-50%) scaleX(0.8);">21</div>
<div class="b" style="left:0px;top:531px;width:19px;height:1px;background:#C8C8C8;"></div>
<div class="t" style="left:10px;top:520.03px;font-size:10.6px;line-height:10.6px;color:#1A1A1A;transform:translateX(-50%) scaleX(0.8);">22</div>
<div class="b" style="left:0px;top:559px;width:19px;height:1px;background:#C8C8C8;"></div>
<div class="t" style="left:10px;top:548.03px;font-size:10.6px;line-height:10.6px;color:#1A1A1A;transform:translateX(-50%) scaleX(0.8);">23</div>
<div class="b" style="left:0px;top:587px;width:19px;height:1px;background:#C8C8C8;"></div>
<div class="t" style="left:10px;top:576.03px;font-size:10.6px;line-height:10.6px;color:#1A1A1A;transform:translateX(-50%) scaleX(0.8);">24</div>
<div class="b" style="left:0px;top:615px;width:19px;height:1px;background:#C8C8C8;"></div>
<div class="t" style="left:10px;top:604.03px;font-size:10.6px;line-height:10.6px;color:#1A1A1A;transform:translateX(-50%) scaleX(0.8);">25</div>
<div class="b" style="left:0px;top:643px;width:19px;height:1px;background:#C8C8C8;"></div>
<div class="t" style="left:10px;top:632.03px;font-size:10.6px;line-height:10.6px;color:#1A1A1A;transform:translateX(-50%) scaleX(0.8);">26</div>
<div class="b" style="left:0px;top:671px;width:19px;height:1px;background:#C8C8C8;"></div>
<div class="t" style="left:10px;top:660.03px;font-size:10.6px;line-height:10.6px;color:#1A1A1A;transform:translateX(-50%) scaleX(0.8);">27</div>
<div class="b" style="left:0px;top:699px;width:19px;height:1px;background:#C8C8C8;"></div>
<div class="t" style="left:10px;top:688.03px;font-size:10.6px;line-height:10.6px;color:#1A1A1A;transform:translateX(-50%) scaleX(0.8);">28</div>
<div class="b" style="left:20px;top:217px;width:1325px;height:453px;background:#fff;"></div>
<div class="b" style="left:1344px;top:216px;width:1px;height:454px;background:#A6A6A6;"></div>
<div class="b" style="left:1345px;top:204px;width:9px;height:467px;background:#E6E6E6;"></div>
<div class="b" style="left:1348px;top:222px;width:6px;height:435px;background:#F0F0F0;"></div>
<div class="b" style="left:1348px;top:207px;width:8px;height:15px;background:#fff;border:1px solid #A0A0A0;box-sizing:border-box;"></div>
<svg class="s" style="left:1351px;top:212px;" width="6" height="5" viewBox="0 0 6 5"><polygon points="3,0.5 6,4 0,4" fill="#333"/></svg>
<div class="b" style="left:1348px;top:230px;width:8px;height:111px;background:#fff;border:1px solid #A0A0A0;box-sizing:border-box;"></div>
<div class="b" style="left:1348px;top:657px;width:8px;height:14px;background:#fff;border:1px solid #A0A0A0;box-sizing:border-box;"></div>
<svg class="s" style="left:1351px;top:662px;" width="6" height="5" viewBox="0 0 6 5"><polygon points="0,0.5 6,0.5 3,4" fill="#333"/></svg>
<div class="t" style="left:43px;top:218.95px;font-size:19.2px;line-height:19.2px;color:#000;">Process Name: Invoice Approval Rules Report</div>
<div class="t" style="left:42.4px;top:242.03px;font-size:10.6px;line-height:10.6px;color:#000;">Report Date: 21-Mar-2023 06:57:44 UTC</div>
<div class="t" style="left:42.4px;top:280.45px;font-size:14px;line-height:14px;color:#000;">Stage Name: Invoice Document Approval Stage</div>
<div class="t" style="left:42.4px;top:297.80px;font-size:10.75px;line-height:10.75px;color:#000;">Stage Enabled: Yes</div>
<div class="t" style="left:42.4px;top:324.35px;font-size:14px;line-height:14px;color:#000;">Participant Name: Invoice Request Default Approvers</div>
<div class="t" style="left:42.4px;top:341.60px;font-size:10.75px;line-height:10.75px;color:#000;">Participant Type: Single</div>
<div class="t" style="left:42.4px;top:355.60px;font-size:10.75px;line-height:10.75px;color:#000;">Participant Enabled: Yes</div>
<div class="t" style="left:42.4px;top:381.65px;font-size:14px;line-height:14px;color:#000;">Ruleset Name: InvoiceRequestDefaultApproversRuleSet</div>
<div class="t" style="left:42.4px;top:399.30px;font-size:10.75px;line-height:10.75px;color:#000;">Ruleset Enabled: Yes</div>
<div class="b" style="left:46px;top:447px;width:789px;height:28px;background:#E7F3FC;"></div>
<div class="b" style="left:46px;top:447px;width:1px;height:224px;background:#A0A0A0;"></div>
<div class="b" style="left:132px;top:447px;width:1px;height:224px;background:#A0A0A0;"></div>
<div class="b" style="left:178px;top:447px;width:1px;height:224px;background:#A0A0A0;"></div>
<div class="b" style="left:227px;top:447px;width:1px;height:224px;background:#A0A0A0;"></div>
<div class="b" style="left:286px;top:447px;width:1px;height:224px;background:#A0A0A0;"></div>
<div class="b" style="left:577px;top:447px;width:1px;height:224px;background:#A0A0A0;"></div>
<div class="b" style="left:834px;top:447px;width:1px;height:224px;background:#A0A0A0;"></div>
<div class="b" style="left:46px;top:447px;width:789px;height:1px;background:#A0A0A0;"></div>
<div class="b" style="left:46px;top:475px;width:789px;height:1px;background:#A0A0A0;"></div>
<div class="b" style="left:46px;top:503px;width:789px;height:1px;background:#A0A0A0;"></div>
<div class="b" style="left:46px;top:531px;width:789px;height:1px;background:#A0A0A0;"></div>
<div class="b" style="left:46px;top:559px;width:789px;height:1px;background:#A0A0A0;"></div>
<div class="b" style="left:46px;top:587px;width:789px;height:1px;background:#A0A0A0;"></div>
<div class="b" style="left:46px;top:615px;width:789px;height:1px;background:#A0A0A0;"></div>
<div class="b" style="left:46px;top:643px;width:789px;height:1px;background:#A0A0A0;"></div>
<div class="t" style="left:49.5px;top:450.29px;font-size:11px;line-height:11px;color:#000;font-weight:bold;">Rule Name</div>
<div class="t" style="left:135.5px;top:450.29px;font-size:11px;line-height:11px;color:#000;font-weight:bold;">Rule</div>
<div class="t" style="left:135.5px;top:464.29px;font-size:11px;line-height:11px;color:#000;font-weight:bold;">Active</div>
<div class="t" style="left:181.5px;top:450.29px;font-size:11px;line-height:11px;color:#000;font-weight:bold;">Priority</div>
<div class="t" style="left:230.5px;top:450.29px;font-size:11px;line-height:11px;color:#000;font-weight:bold;">Rule</div>
<div class="t" style="left:230.5px;top:464.29px;font-size:11px;line-height:11px;color:#000;font-weight:bold;">Mode</div>
<div class="t" style="left:289.5px;top:450.29px;font-size:11px;line-height:11px;color:#000;font-weight:bold;">Conditions</div>
<div class="t" style="left:580.5px;top:450.29px;font-size:11px;line-height:11px;color:#000;font-weight:bold;">List Builder</div>
<div class="t" style="left:49.5px;top:478.20px;font-size:10.4px;line-height:10.4px;color:#000;">IspUnmatchedIn</div>
<div class="t" style="left:49.5px;top:492.20px;font-size:10.4px;line-height:10.4px;color:#000;">voiceRule</div>
<div class="t" style="left:134.8px;top:477.90px;font-size:10.75px;line-height:10.75px;color:#000;">Yes</div>
<div class="t" style="left:181.5px;top:477.90px;font-size:10.75px;line-height:10.75px;color:#000;">Medium</div>
<div class="t" style="left:230.5px;top:477.90px;font-size:10.75px;line-height:10.75px;color:#000;">Basic</div>
<div class="t" style="left:289.5px;top:477.90px;font-size:10.75px;line-height:10.75px;color:#000;">1 is 1</div>
<div class="t" style="left:580.7px;top:477.90px;font-size:10.75px;line-height:10.75px;color:#000;">Resource</div>
<div class="t" style="left:49.5px;top:506.20px;font-size:10.4px;line-height:10.4px;color:#000;">IspUnmatchedIn</div>
<div class="t" style="left:49.5px;top:520.20px;font-size:10.4px;line-height:10.4px;color:#000;">voiceRule</div>
<div class="t" style="left:134.8px;top:505.90px;font-size:10.75px;line-height:10.75px;color:#000;">Yes</div>
<div class="t" style="left:181.5px;top:505.90px;font-size:10.75px;line-height:10.75px;color:#000;">Medium</div>
<div class="t" style="left:230.5px;top:505.90px;font-size:10.75px;line-height:10.75px;color:#000;">Basic</div>
<div class="t" style="left:580.7px;top:505.90px;font-size:10.75px;line-height:10.75px;color:#000;">Response Type = Required</div>
<div class="t" style="left:49.5px;top:534.20px;font-size:10.4px;line-height:10.4px;color:#000;">IspUnmatchedIn</div>
<div class="t" style="left:49.5px;top:548.20px;font-size:10.4px;line-height:10.4px;color:#000;">voiceRule</div>
<div class="t" style="left:134.8px;top:533.90px;font-size:10.75px;line-height:10.75px;color:#000;">Yes</div>
<div class="t" style="left:181.5px;top:533.90px;font-size:10.75px;line-height:10.75px;color:#000;">Medium</div>
<div class="t" style="left:230.5px;top:533.90px;font-size:10.75px;line-height:10.75px;color:#000;">Basic</div>
<div class="t" style="left:580.7px;top:533.90px;font-size:10.75px;line-height:10.75px;color:#000;">Users = Task.payload.Invoice Requestor</div>
<div class="t" style="left:49.5px;top:562.20px;font-size:10.4px;line-height:10.4px;color:#000;">IspUnmatchedIn</div>
<div class="t" style="left:49.5px;top:576.20px;font-size:10.4px;line-height:10.4px;color:#000;">voiceRule</div>
<div class="t" style="left:134.8px;top:561.90px;font-size:10.75px;line-height:10.75px;color:#000;">Yes</div>
<div class="t" style="left:181.5px;top:561.90px;font-size:10.75px;line-height:10.75px;color:#000;">Medium</div>
<div class="t" style="left:230.5px;top:561.90px;font-size:10.75px;line-height:10.75px;color:#000;">Basic</div>
<div class="t" style="left:580.7px;top:561.90px;font-size:10.75px;line-height:10.75px;color:#000;">Groups = null</div>
<div class="t" style="left:49.5px;top:590.20px;font-size:10.4px;line-height:10.4px;color:#000;">IspUnmatchedIn</div>
<div class="t" style="left:49.5px;top:604.20px;font-size:10.4px;line-height:10.4px;color:#000;">voiceRule</div>
<div class="t" style="left:134.8px;top:589.90px;font-size:10.75px;line-height:10.75px;color:#000;">Yes</div>
<div class="t" style="left:181.5px;top:589.90px;font-size:10.75px;line-height:10.75px;color:#000;">Medium</div>
<div class="t" style="left:230.5px;top:589.90px;font-size:10.75px;line-height:10.75px;color:#000;">Basic</div>
<div class="t" style="left:580.7px;top:589.90px;font-size:10.75px;line-height:10.75px;color:#000;">Application Role = null</div>
<div class="t" style="left:49.5px;top:618.20px;font-size:10.4px;line-height:10.4px;color:#000;">IspUnmatchedIn</div>
<div class="t" style="left:49.5px;top:632.20px;font-size:10.4px;line-height:10.4px;color:#000;">voiceRule</div>
<div class="t" style="left:134.8px;top:617.90px;font-size:10.75px;line-height:10.75px;color:#000;">Yes</div>
<div class="t" style="left:181.5px;top:617.90px;font-size:10.75px;line-height:10.75px;color:#000;">Medium</div>
<div class="t" style="left:230.5px;top:617.90px;font-size:10.75px;line-height:10.75px;color:#000;">Basic</div>
<div class="t" style="left:580.7px;top:617.90px;font-size:10.75px;line-height:10.75px;color:#000;">Rule Name = &quot;IspUnmatchedInvoiceRule&quot;</div>
<div class="t" style="left:49.5px;top:646.20px;font-size:10.4px;line-height:10.4px;color:#000;">IspUnmatchedIn</div>
<div class="t" style="left:49.5px;top:660.20px;font-size:10.4px;line-height:10.4px;color:#000;">voiceRule</div>
<div class="t" style="left:134.8px;top:645.90px;font-size:10.75px;line-height:10.75px;color:#000;">Yes</div>
<div class="t" style="left:181.5px;top:645.90px;font-size:10.75px;line-height:10.75px;color:#000;">Medium</div>
<div class="t" style="left:230.5px;top:645.90px;font-size:10.75px;line-height:10.75px;color:#000;">Basic</div>
<div class="t" style="left:580.7px;top:645.90px;font-size:10.75px;line-height:10.75px;color:#000;">Dimension Id = null</div>
<div class="t" style="left:49.5px;top:674.20px;font-size:10.4px;line-height:10.4px;color:#000;">IspUnmatchedIn</div>
<div class="t" style="left:49.5px;top:688.20px;font-size:10.4px;line-height:10.4px;color:#000;">voiceRule</div>
<div class="t" style="left:134.8px;top:673.90px;font-size:10.75px;line-height:10.75px;color:#000;">Yes</div>
<div class="t" style="left:181.5px;top:673.90px;font-size:10.75px;line-height:10.75px;color:#000;">Medium</div>
<div class="t" style="left:230.5px;top:673.90px;font-size:10.75px;line-height:10.75px;color:#000;">Basic</div>
<div class="t" style="left:580.7px;top:673.90px;font-size:10.75px;line-height:10.75px;color:#000;"></div>
<div class="b" style="left:0px;top:670px;width:1354px;height:22px;background:#E6E6E6;"></div>
<div class="b" style="left:0px;top:670px;width:1345px;height:1px;background:#ABABAB;"></div>
<svg class="s" style="left:26px;top:679px;" width="6" height="9" viewBox="0 0 6 9"><polygon points="5,0.5 5,8 0.5,4.25" fill="#BDBDBD"/></svg>
<svg class="s" style="left:54px;top:679px;" width="6" height="9" viewBox="0 0 6 9"><polygon points="0.5,0.5 0.5,8 5,4.25" fill="#BDBDBD"/></svg>
<div class="b" style="left:100px;top:674px;width:1px;height:18px;background:#ABABAB;"></div>
<div class="t" style="left:117.3px;top:677.11px;font-size:13.1px;line-height:13.1px;color:#444444;">Configuration Review Report</div>
<div class="b" style="left:302px;top:670px;width:102px;height:22px;background:#fff;"></div>
<div class="b" style="left:302px;top:670px;width:1px;height:22px;background:#ABABAB;"></div>
<div class="b" style="left:403px;top:670px;width:1px;height:22px;background:#ABABAB;"></div>
<div class="t" style="left:314.4px;top:677.28px;font-size:12.9px;line-height:12.9px;color:#217346;font-weight:bold;letter-spacing:-0.2px;">Rules Report</div>
<div class="b" style="left:403px;top:670px;width:1px;height:22px;background:#ABABAB;"></div>
<svg class="s" style="left:437px;top:677px;" width="16" height="16" viewBox="0 0 16 16"><circle cx="7.5" cy="7.5" r="6.5" fill="none" stroke="#C6C6C6" stroke-width="1.2"/><line x1="7.5" y1="4" x2="7.5" y2="11" stroke="#C6C6C6" stroke-width="1.4"/><line x1="4" y1="7.5" x2="11" y2="7.5" stroke="#C6C6C6" stroke-width="1.4"/></svg>
<div class="b" style="left:820px;top:679px;width:2px;height:2px;background:#ABABAB;"></div>
<div class="b" style="left:820px;top:683px;width:2px;height:2px;background:#ABABAB;"></div>
<div class="b" style="left:820px;top:687px;width:2px;height:2px;background:#ABABAB;"></div>
<div class="b" style="left:836px;top:677px;width:472px;height:15px;background:#F0F0F0;"></div>
<div class="b" style="left:1308px;top:677px;width:22px;height:15px;background:#F0F0F0;"></div>
<div class="b" style="left:836px;top:677px;width:15px;height:16px;background:#fff;border:1px solid #A0A0A0;box-sizing:border-box;"></div>
<svg class="s" style="left:840.5px;top:680.5px;" width="6" height="9" viewBox="0 0 6 9"><polygon points="5,0.5 5,8 0.5,4.25" fill="#222"/></svg>
<div class="b" style="left:850px;top:677px;width:458px;height:16px;background:#fff;border:1px solid #A0A0A0;box-sizing:border-box;"></div>
<div class="b" style="left:850px;top:677px;width:2px;height:16px;background:#A0A0A0;"></div>
<div class="b" style="left:1330px;top:677px;width:15px;height:16px;background:#fff;border:1px solid #A0A0A0;box-sizing:border-box;"></div>
<svg class="s" style="left:1335.5px;top:680.5px;" width="6" height="9" viewBox="0 0 6 9"><polygon points="0.5,0.5 0.5,8 5,4.25" fill="#222"/></svg>
<div class="b" style="left:1345px;top:671px;width:9px;height:21px;background:#E6E6E6;"></div>
<div class="b" style="left:1348px;top:671px;width:6px;height:21px;background:#F0F0F0;"></div>
</body></html>
